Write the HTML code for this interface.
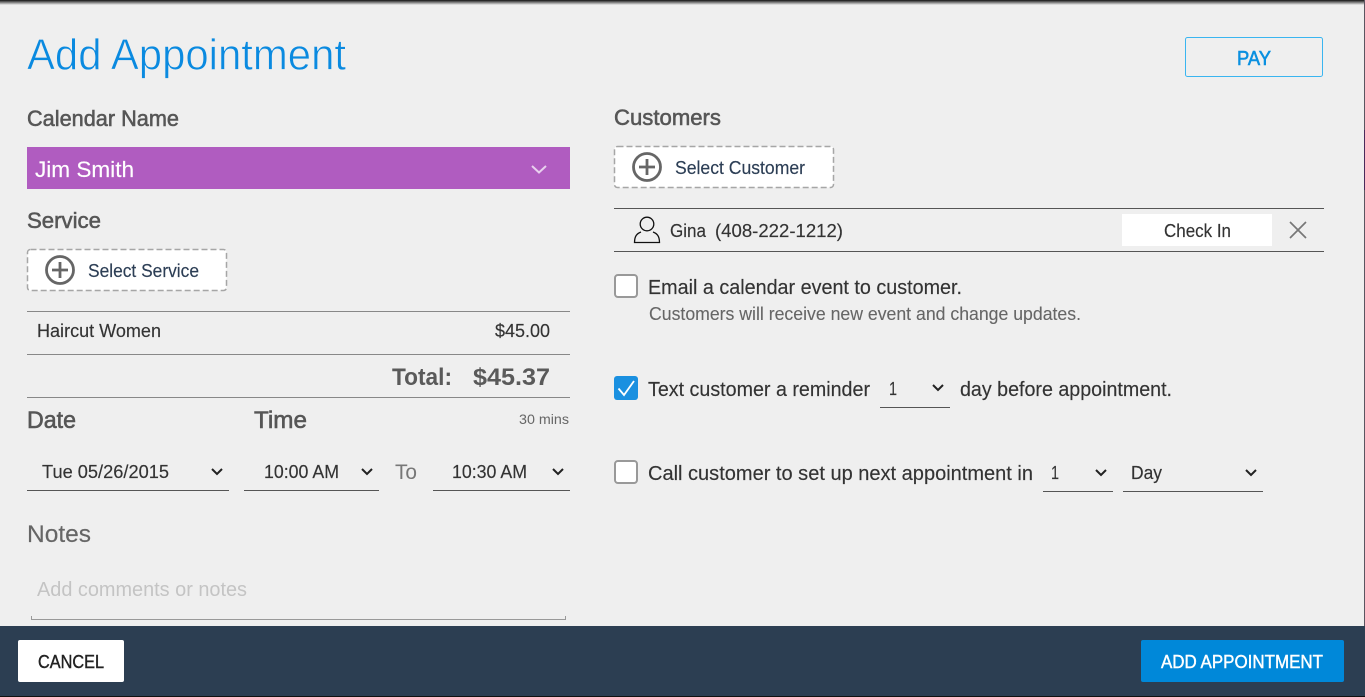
<!DOCTYPE html>
<html><head><meta charset="utf-8"><title>Add Appointment</title>
<style>
html,body{margin:0;padding:0;background:#efefef;width:1365px;height:697px;overflow:hidden}
svg{display:block}
text{font-family:"Liberation Sans",sans-serif;white-space:pre}
.h{font-size:22px;fill:#565656;stroke:#565656;stroke-width:.55px}
.s{font-size:18px;fill:#333;stroke:#333;stroke-width:.15px}
.t{font-size:20px;fill:#333;stroke:#333;stroke-width:.15px}
.chev{fill:none;stroke:#222;stroke-width:2}
</style></head><body>
<svg width="1365" height="697" viewBox="0 0 1365 697" xmlns="http://www.w3.org/2000/svg">
<defs><linearGradient id="top" x1="0" y1="0" x2="0" y2="1"><stop offset="0" stop-color="#111"/><stop offset=".3" stop-color="#555"/><stop offset="1" stop-color="#efefef"/></linearGradient></defs>
<rect width="1365" height="697" fill="#efefef"/>
<rect width="1365" height="5" fill="url(#top)"/>
<rect x="1364" y="0" width="1" height="697" fill="#5a5560"/>
<rect x="1364" y="130" width="1" height="60" fill="#4a2a5a"/>

<text x="27" y="69.500" font-size="44" fill="#0a8ae0" stroke="#efefef" stroke-width=".7" textLength="319" lengthAdjust="spacingAndGlyphs">Add Appointment</text>
<rect x="1185.500" y="37.500" width="137" height="39" rx="2" fill="none" stroke="#3ab5f0"/>
<text x="1237" y="65" font-size="20" fill="#0a90e0" stroke="#0a90e0" stroke-width=".6" textLength="34" lengthAdjust="spacingAndGlyphs">PAY</text>

<text class="h" x="27" y="126" textLength="152" lengthAdjust="spacingAndGlyphs">Calendar Name</text>
<rect x="27" y="147" width="543" height="42" fill="#b05cc0"/>
<text x="35" y="177" font-size="22" fill="#fff" stroke="#fff" stroke-width=".15" textLength="99" lengthAdjust="spacingAndGlyphs">Jim Smith</text>
<path d="M532 166l7 6.500 7-6.500" fill="none" stroke="#e8d0ee" stroke-width="2"/>

<text class="h" x="27" y="228" textLength="74" lengthAdjust="spacingAndGlyphs">Service</text>
<rect x="27.500" y="249.500" width="199" height="41" rx="3" fill="#fff" stroke="#a6a6a6" stroke-width="1.500" stroke-dasharray="6 3"/>
<circle cx="60" cy="270" r="13.500" fill="none" stroke="#666" stroke-width="2.800"/>
<path d="M52 270h16M60 262v16" stroke="#666" stroke-width="2.800" fill="none"/>
<text x="88" y="277" font-size="18" fill="#2c3e55" stroke="#2c3e55" stroke-width=".15" textLength="111" lengthAdjust="spacingAndGlyphs">Select Service</text>

<rect x="27" y="311" width="543" height="1" fill="#888"/>
<text class="s" x="37" y="337" textLength="124" lengthAdjust="spacingAndGlyphs">Haircut Women</text>
<text class="s" x="495" y="337" textLength="55" lengthAdjust="spacingAndGlyphs">$45.00</text>
<rect x="27" y="354" width="543" height="1" fill="#888"/>
<text x="392" y="385" font-size="24" font-weight="700" fill="#5a5a5a" textLength="60" lengthAdjust="spacingAndGlyphs">Total:</text>
<text x="473" y="385" font-size="24" font-weight="700" fill="#5a5a5a" textLength="77" lengthAdjust="spacingAndGlyphs">$45.37</text>
<rect x="27" y="397" width="543" height="1" fill="#888"/>

<text x="27" y="428" font-size="24" fill="#565656" stroke="#565656" stroke-width=".6" textLength="49" lengthAdjust="spacingAndGlyphs">Date</text>
<text x="254" y="428" font-size="24" fill="#565656" stroke="#565656" stroke-width=".6" textLength="53" lengthAdjust="spacingAndGlyphs">Time</text>
<text x="519" y="424" font-size="14" fill="#666" textLength="50" lengthAdjust="spacingAndGlyphs">30 mins</text>

<text class="s" x="42" y="478" textLength="127" lengthAdjust="spacingAndGlyphs">Tue 05/26/2015</text>
<path class="chev" d="M212 469l5 5 5-5"/>
<rect x="27" y="490" width="202" height="1" fill="#555"/>
<text class="s" x="264" y="478" textLength="75" lengthAdjust="spacingAndGlyphs">10:00 AM</text>
<path class="chev" d="M362 469l5 5 5-5"/>
<rect x="244" y="490" width="135" height="1" fill="#555"/>
<text x="395" y="479" font-size="21" fill="#777" textLength="22" lengthAdjust="spacingAndGlyphs">To</text>
<text class="s" x="452" y="478" textLength="75" lengthAdjust="spacingAndGlyphs">10:30 AM</text>
<path class="chev" d="M553 469l5 5 5-5"/>
<rect x="433" y="490" width="137" height="1" fill="#555"/>

<text x="27" y="542" font-size="24" fill="#666" stroke="#666" stroke-width=".15" textLength="64" lengthAdjust="spacingAndGlyphs">Notes</text>
<text x="37" y="596" font-size="20" fill="#c4c4c4" textLength="210" lengthAdjust="spacingAndGlyphs">Add comments or notes</text>
<path d="M31.500 616v3.500h534v-3.500" fill="none" stroke="#999"/>

<text class="h" x="614" y="125" textLength="107" lengthAdjust="spacingAndGlyphs">Customers</text>
<rect x="614.500" y="146.500" width="219" height="41" rx="3" fill="#fff" stroke="#a6a6a6" stroke-width="1.500" stroke-dasharray="6 3"/>
<circle cx="647" cy="167" r="13.500" fill="none" stroke="#666" stroke-width="2.800"/>
<path d="M639 167h16M647 159v16" stroke="#666" stroke-width="2.800" fill="none"/>
<text x="675" y="174" font-size="18" fill="#2c3e55" stroke="#2c3e55" stroke-width=".15" textLength="130" lengthAdjust="spacingAndGlyphs">Select Customer</text>

<rect x="614" y="208" width="710" height="1" fill="#555"/>
<circle cx="647" cy="224" r="6.800" fill="none" stroke="#111" stroke-width="1.300"/>
<path d="M641 232c-4 1.500-6.500 4-6.500 10.500h25c0-6.500-2.500-9-6.500-10.500" fill="none" stroke="#111" stroke-width="1.300"/>
<text class="s" x="670" y="237" textLength="36" lengthAdjust="spacingAndGlyphs">Gina</text>
<text class="s" x="715" y="237" textLength="128" lengthAdjust="spacingAndGlyphs">(408-222-1212)</text>
<rect x="1122" y="214" width="150" height="32" fill="#fff"/>
<text class="s" x="1164" y="237" textLength="67" lengthAdjust="spacingAndGlyphs">Check In</text>
<path d="M1290 222l16 16M1306 222l-16 16" stroke="#777" stroke-width="1.700" fill="none"/>
<rect x="614" y="251" width="710" height="1" fill="#555"/>

<rect x="615" y="275" width="22" height="22" rx="3" fill="#fff" stroke="#999" stroke-width="2"/>
<text class="t" x="648" y="294" textLength="314" lengthAdjust="spacingAndGlyphs">Email a calendar event to customer.</text>
<text x="649" y="320" font-size="18" fill="#666" stroke="#666" stroke-width=".1" textLength="432" lengthAdjust="spacingAndGlyphs">Customers will receive new event and change updates.</text>

<rect x="614" y="376" width="24" height="24" rx="3" fill="#1a90e0"/>
<path d="M618.500 388.500l5.500 6.500 10-14" fill="none" stroke="#fff" stroke-width="1.800"/>
<text class="t" x="648" y="396" textLength="222" lengthAdjust="spacingAndGlyphs">Text customer a reminder</text>
<text class="s" x="889" y="395" textLength="8" lengthAdjust="spacingAndGlyphs">1</text>
<path class="chev" d="M933 385l5 5 5-5"/>
<rect x="880" y="407" width="70" height="1" fill="#555"/>
<text class="t" x="960" y="396" textLength="212" lengthAdjust="spacingAndGlyphs">day before appointment.</text>

<rect x="615" y="461" width="22" height="22" rx="3" fill="#fff" stroke="#999" stroke-width="2"/>
<text class="t" x="648" y="480" textLength="385" lengthAdjust="spacingAndGlyphs">Call customer to set up next appointment in</text>
<text class="s" x="1051" y="479" textLength="8" lengthAdjust="spacingAndGlyphs">1</text>
<path class="chev" d="M1096 470l5 5 5-5"/>
<rect x="1043" y="491" width="70" height="1" fill="#555"/>
<text class="s" x="1131" y="479" textLength="31" lengthAdjust="spacingAndGlyphs">Day</text>
<path class="chev" d="M1246 470l5 5 5-5"/>
<rect x="1123" y="491" width="140" height="1" fill="#555"/>

<rect x="0" y="626" width="1365" height="70" fill="#2c3e52"/>
<rect x="0" y="696" width="1365" height="1" fill="#111"/>
<rect x="18" y="640" width="106" height="42" rx="2" fill="#fff"/>
<text x="38" y="668" font-size="18" fill="#222" stroke="#222" stroke-width=".4" textLength="66" lengthAdjust="spacingAndGlyphs">CANCEL</text>
<rect x="1141" y="640" width="203" height="42" rx="2" fill="#0088d9"/>
<text x="1161" y="668" font-size="18" fill="#fff" stroke="#fff" stroke-width=".4" textLength="162" lengthAdjust="spacingAndGlyphs">ADD APPOINTMENT</text>
</svg>
</body></html>
